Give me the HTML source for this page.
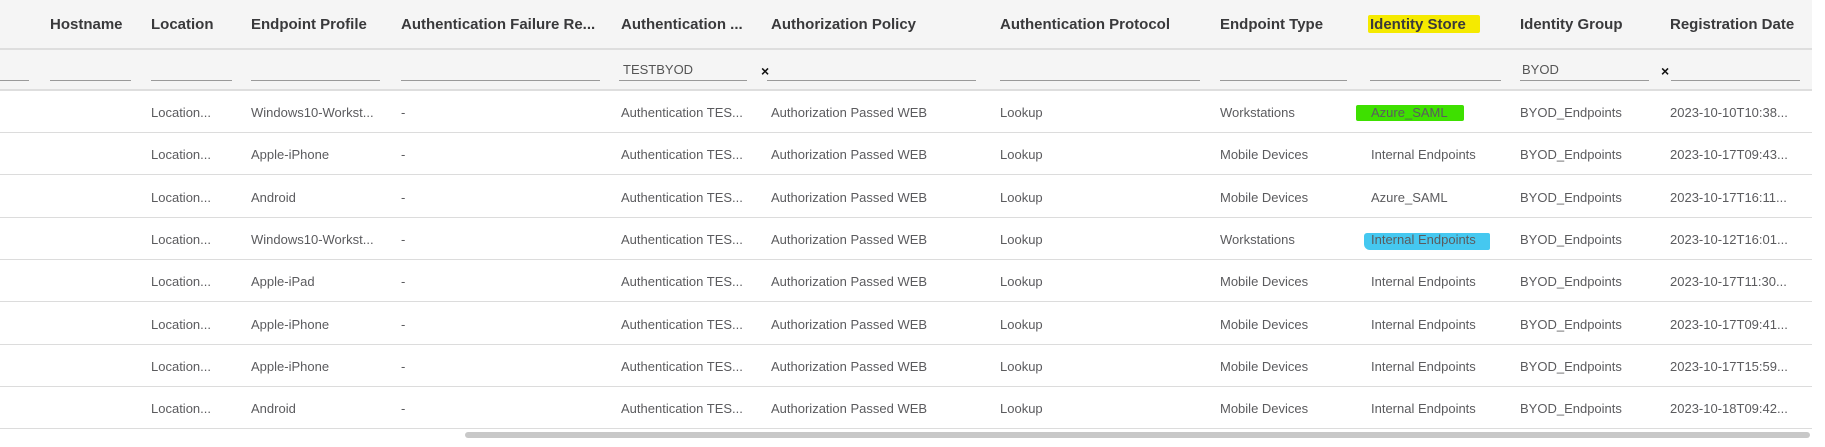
<!DOCTYPE html>
<html><head><style>
body{margin:0;width:1825px;height:447px;background:#fff;position:relative;overflow:hidden;font-family:"Liberation Sans",sans-serif}
.a{position:absolute;white-space:nowrap}
.h{font-weight:bold;font-size:15px;color:#39393b;top:16px}
.c{font-size:13px;color:#5b5b5e}
.u{position:absolute;height:1px;background:#9a9a9a;top:80px}
.l{position:absolute;left:0;width:1812px;height:1px;background:#dcdcdc}
</style></head><body>
<div class="a" style="left:0;top:0;width:1812px;height:91px;background:#f5f5f5"></div>
<div class="a" style="left:0;top:48px;width:1812px;height:2px;background:#dedede"></div>
<div class="a" style="left:0;top:89px;width:1812px;height:2px;background:#dedede"></div>
<div class="a" style="left:1368px;top:15px;width:112px;height:18px;background:#f5ea00;border-radius:2px"></div>
<div class="a h" style="left:50px">Hostname</div>
<div class="a h" style="left:151px">Location</div>
<div class="a h" style="left:251px">Endpoint Profile</div>
<div class="a h" style="left:401px">Authentication Failure Re...</div>
<div class="a h" style="left:621px">Authentication ...</div>
<div class="a h" style="left:771px">Authorization Policy</div>
<div class="a h" style="left:1000px">Authentication Protocol</div>
<div class="a h" style="left:1220px">Endpoint Type</div>
<div class="a h" style="left:1370px">Identity Store</div>
<div class="a h" style="left:1520px">Identity Group</div>
<div class="a h" style="left:1670px">Registration Date</div>
<div class="u" style="left:0;width:29px"></div>
<div class="u" style="left:50px;width:81px"></div>
<div class="u" style="left:151px;width:81px"></div>
<div class="u" style="left:251px;width:129px"></div>
<div class="u" style="left:401px;width:199px"></div>
<div class="u" style="left:619px;width:128px"></div>
<div class="u" style="left:767px;width:209px"></div>
<div class="u" style="left:1000px;width:200px"></div>
<div class="u" style="left:1220px;width:127px"></div>
<div class="u" style="left:1370px;width:131px"></div>
<div class="u" style="left:1520px;width:129px"></div>
<div class="u" style="left:1671px;width:129px"></div>
<div class="a c" style="left:623px;top:62px;color:#555">TESTBYOD</div>
<div class="a c" style="left:1522px;top:62px;color:#555">BYOD</div>
<div class="a" style="left:761px;top:63px;font-size:14px;font-weight:bold;color:#111">×</div>
<div class="a" style="left:1661px;top:63px;font-size:14px;font-weight:bold;color:#111">×</div>
<div class="a" style="left:1356px;top:105px;width:108px;height:16px;background:#3ee000;border-radius:2px"></div>
<div class="a" style="left:1364px;top:233px;width:126px;height:17px;background:#45c8f0;border-radius:3px 2px 2px 6px"></div>
<div id="rows"></div>
<div class="a" style="left:465px;top:432px;width:1345px;height:6px;background:#c8c8c8;border-radius:3px"></div>
<script>
var d=[["Windows10-Workst...","Workstations","Azure_SAML","2023-10-10T10:38..."],
["Apple-iPhone","Mobile Devices","Internal Endpoints","2023-10-17T09:43..."],
["Android","Mobile Devices","Azure_SAML","2023-10-17T16:11..."],
["Windows10-Workst...","Workstations","Internal Endpoints","2023-10-12T16:01..."],
["Apple-iPad","Mobile Devices","Internal Endpoints","2023-10-17T11:30..."],
["Apple-iPhone","Mobile Devices","Internal Endpoints","2023-10-17T09:41..."],
["Apple-iPhone","Mobile Devices","Internal Endpoints","2023-10-17T15:59..."],
["Android","Mobile Devices","Internal Endpoints","2023-10-18T09:42..."]];
var h="";
d.forEach(function(r,i){var t=91+i*42.3,y=t+14;
function c(x,s){h+='<div class="a c" style="left:'+x+'px;top:'+y+'px">'+s+'</div>';}
c(151,"Location...");c(251,r[0]);c(401,"-");c(621,"Authentication TES...");c(771,"Authorization Passed WEB");c(1000,"Lookup");c(1220,r[1]);c(1371,r[2]);c(1520,"BYOD_Endpoints");c(1670,r[3]);
h+='<div class="l" style="top:'+Math.round(t+41)+'px"></div>';});
document.getElementById("rows").innerHTML=h;
</script>
</body></html>
